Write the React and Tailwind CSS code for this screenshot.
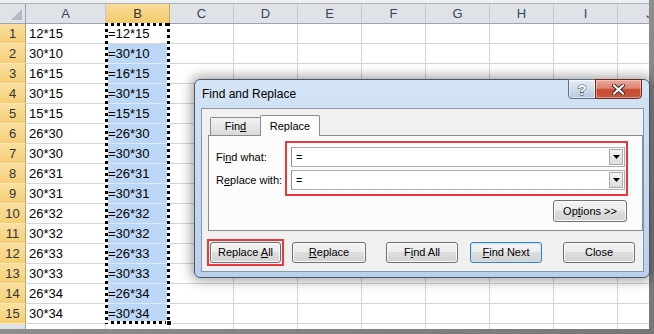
import React from "react";

const cols = ["A", "B", "C", "D", "E", "F", "G", "H", "I", "J"];
const data = [
  "12*15", "30*10", "16*15", "30*15", "15*15", "26*30", "30*30", "26*31",
  "30*31", "26*32", "30*32", "26*33", "30*33", "26*34", "30*34",
];

const btn =
  "h-[21px] rounded-[3px] border flex items-center justify-center text-[11px] text-black bg-[linear-gradient(#f3f3f3_0%,#ececec_50%,#dedede_50%,#d2d2d2_100%)]";
const btnNormal = btn + " border-[#707070] shadow-[inset_0_0_0_1px_#fbfbfb]";
const btnFocus = btn + " border-[#3c7fb1] shadow-[inset_0_0_0_1px_#c5e6fa]";

function DropBtn() {
  return (
    <div className="w-[14px] h-[16px] mr-[1px] border border-[#a9a9a9] bg-gradient-to-b from-[#f4f4f4] to-[#dcdcdc] flex items-center justify-center">
      <svg width="7" height="4" viewBox="0 0 7 4">
        <polygon points="0,0 7,0 3.5,4" fill="#000" />
      </svg>
    </div>
  );
}

function Dialog() {
  return (
    <div className="absolute left-[194px] top-[79px] w-[456px] h-[199px] rounded-[6px] border border-[#4a5565] bg-gradient-to-b from-[#d4e4f6] via-[#c6d9f0] to-[#bad0eb] shadow-[0_0_12px_3px_rgba(0,0,0,0.35)] flex flex-col">
      <div className="h-[28px] pl-[7px] flex items-center text-[12px] text-black">
        Find and Replace
      </div>
      {/* title buttons */}
      <div className="absolute top-[-1px] left-[373px] flex">
        <div className="w-[28px] h-[20px] rounded-bl-[4px] border border-[#5c6d83] bg-gradient-to-b from-[#e6eef8] to-[#b5c9e2] shadow-[inset_0_0_0_1px_rgba(255,255,255,0.6)] flex items-center justify-center">
          <span className="text-[15px] font-bold leading-none text-white [-webkit-text-stroke:1px_#3a4454] [paint-order:stroke_fill]">
            ?
          </span>
        </div>
        <div className="w-[47px] h-[20px] -ml-px rounded-br-[4px] border border-[#6a2b22] bg-[linear-gradient(#e9aa9c_0%,#dc8371_45%,#c84a31_55%,#c9573c_100%)] shadow-[inset_0_0_0_1px_rgba(255,220,210,0.5)] flex items-center justify-center">
          <svg width="13" height="11" viewBox="0 0 13 11">
            <path d="M2 1.5 L11 9.5 M11 1.5 L2 9.5" stroke="#3b2a28" strokeWidth="4" strokeLinecap="square" />
            <path d="M2 1.5 L11 9.5 M11 1.5 L2 9.5" stroke="#fff" strokeWidth="2" strokeLinecap="square" />
          </svg>
        </div>
      </div>

      {/* client */}
      <div className="ml-[6px] w-[443px] h-[164px] border border-[#8597ae] bg-[#f0f0f0] flex flex-col">
        {/* tabs */}
        <div className="h-[26px] pl-[8px] flex items-start relative z-10">
          <div className="mt-[8px] w-[51px] h-[18px] border border-b-0 border-[#898c95] rounded-t-[2px] bg-gradient-to-b from-[#f3f3f3] to-[#dadada] flex items-center justify-center text-[11px] text-black">
            <span>
              Fin<u>d</u>
            </span>
          </div>
          <div className="-ml-px mt-[6px] w-[60px] h-[21px] border border-b-0 border-[#898c95] rounded-t-[2px] bg-[#fcfcfc] flex items-center justify-center text-[11px] text-black">
            Replace
          </div>
        </div>
        {/* panel */}
        <div className="ml-[6px] w-[435px] h-[96px] border border-[#898c95] bg-[#fcfcfc] flex flex-col">
          <div className="flex pt-[5px] pl-[7px]">
            <div className="w-[69px] flex flex-col pt-[6px] gap-[3px] text-[11px] text-black">
              <div className="h-[20px] flex items-center">
                <span>
                  Fi<u>n</u>d what:
                </span>
              </div>
              <div className="h-[20px] flex items-center">
                <span>
                  R<u>e</u>place with:
                </span>
              </div>
            </div>
            <div className="w-[343px] h-[55px] border-2 border-[#e8383d] pl-[4px] pt-[4px] flex flex-col gap-[3px]">
              <div className="w-[334px] h-[20px] border border-[#abadb3] border-l-[#8f9298] bg-white flex items-center justify-between pl-[4px] text-[11px]">
                <span>=</span>
                <DropBtn />
              </div>
              <div className="w-[334px] h-[20px] border border-[#abadb3] border-l-[#8f9298] bg-white flex items-center justify-between pl-[4px] text-[11px]">
                <span>=</span>
                <DropBtn />
              </div>
            </div>
          </div>
          <div className="flex justify-end pr-[15px] mt-[4px]">
            <div className={btnNormal + " w-[74px] h-[22px]"}>
              <span>
                Op<u>t</u>ions &gt;&gt;
              </span>
            </div>
          </div>
        </div>
        {/* bottom buttons */}
        <div className="mt-[8px] h-[27px] pl-[5px] flex items-center">
          <div className="w-[77px] h-[27px] border-2 border-[#e8383d] p-[1px]">
            <div className={btnNormal + " w-[71px]"}>
              <span>
                Replace <u>A</u>ll
              </span>
            </div>
          </div>
          <div className={btnNormal + " ml-[8px] w-[74px]"}>
            <span>
              <u>R</u>eplace
            </span>
          </div>
          <div className={btnNormal + " ml-[20px] w-[72px]"}>
            <span>
              F<u>i</u>nd All
            </span>
          </div>
          <div className={btnFocus + " ml-[12px] w-[72px]"}>
            <span>
              <u>F</u>ind Next
            </span>
          </div>
          <div className={btnNormal + " ml-[21px] w-[72px]"}>Close</div>
        </div>
      </div>
    </div>
  );
}

function Ants() {
  const h = "bg-[repeating-linear-gradient(90deg,#000_0_3px,#fff_3px_6px)]";
  const v = "bg-[repeating-linear-gradient(180deg,#000_0_3px,#fff_3px_6px)]";
  return (
    <div className="absolute left-[105px] top-[23px] w-[65px] h-[301px] pointer-events-none">
      <div className={"absolute left-0 right-0 top-0 h-[3px] " + h} />
      <div className={"absolute left-0 right-0 bottom-0 h-[3px] " + h} />
      <div className={"absolute top-0 bottom-0 left-0 w-[3px] " + v} />
      <div className={"absolute top-0 bottom-0 right-0 w-[3px] " + v} />
      <div className="absolute right-[-2px] bottom-[-2px] w-[6px] h-[6px] bg-black border border-white" />
    </div>
  );
}

export default function App() {
  return (
    <div className="w-[654px] h-[334px] relative overflow-hidden bg-gradient-to-br from-[#a4a4a4] to-[#777] font-['Liberation_Sans',Arial,sans-serif]">
      <div className="w-[649px] h-[329px] bg-white overflow-hidden relative">
        <div className="h-[4px] bg-[#eef0f3] border-b border-[#a9b1bb]" />
        <div className="grid grid-cols-[26px_80px_repeat(9,64px)] w-max">
          {/* header row */}
          <div className="h-[20px] bg-[#dfe3e8] border-r border-b border-[#9aa4b0] flex items-end justify-end pr-[3px] pb-[3px]">
            <svg width="11" height="11" viewBox="0 0 11 11">
              <polygon points="11,0 11,11 0,11" fill="#b4bac2" />
            </svg>
          </div>
          {cols.map((c) =>
            c === "B" ? (
              <div
                key={c}
                className="h-[20px] bg-gradient-to-b from-[#f9dc97] to-[#f3c96c] border-r border-b border-[#c9a867] flex items-center justify-center text-[13px] text-[#333]"
              >
                {c}
              </div>
            ) : (
              <div
                key={c}
                className="h-[20px] bg-[#dfe3e8] border-r border-b border-r-[#c3c9d1] border-b-[#9aa4b0] flex items-center justify-center text-[13px] text-[#34465c]"
              >
                {c}
              </div>
            )
          )}
          {/* data rows */}
          {data.map((v, i) => (
            <React.Fragment key={i}>
              <div className="h-[20px] bg-gradient-to-b from-[#fadf9f] to-[#f5cf74] border-r border-b border-r-[#c0a163] border-b-[#fbe7b6] flex items-center justify-center text-[13px] text-[#333]">
                {i + 1}
              </div>
              <div className="h-[20px] border-r border-b border-[#d4d4d4] flex items-center pl-[3px] text-[13px] text-black">
                {v}
              </div>
              <div
                className={
                  "h-[20px] border-r border-b flex items-center pl-[2px] text-[13px] text-black " +
                  (i === 0
                    ? "bg-white border-[#d4d4d4]"
                    : "bg-[#bcd7f6] border-r-[#d4d4d4] border-b-[#dce8f8]")
                }
              >
                ={v}
              </div>
              {cols.slice(2).map((c) => (
                <div key={c} className="h-[20px] border-r border-b border-[#d4d4d4]" />
              ))}
            </React.Fragment>
          ))}
          {/* row 16 */}
          <div className="h-[20px] bg-[#dfe3e8] border-r border-b border-[#9aa4b0] flex items-center justify-center text-[13px] text-[#34465c]">
            16
          </div>
          {cols.map((c) => (
            <div key={c} className="h-[20px] border-r border-b border-[#d4d4d4]" />
          ))}
        </div>
        <Ants />
      </div>
      <Dialog />
    </div>
  );
}
